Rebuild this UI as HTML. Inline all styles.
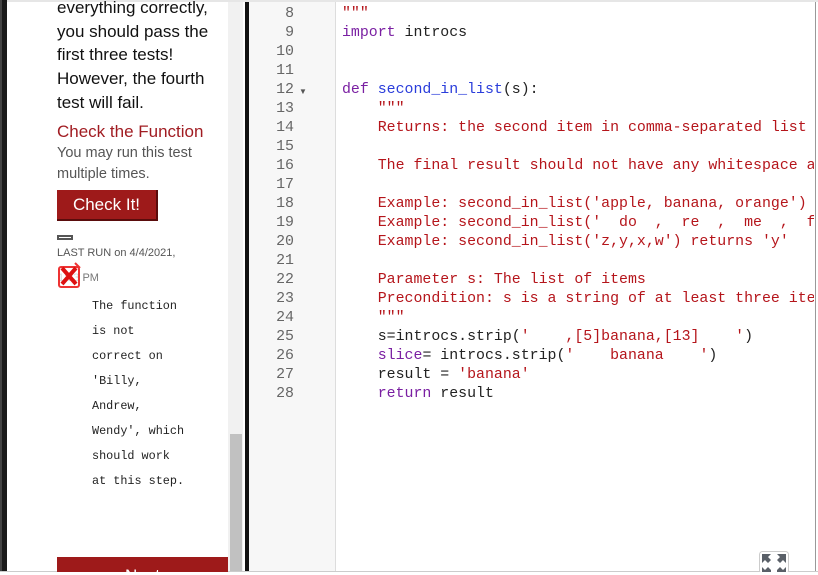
<!DOCTYPE html>
<html><head><style>
*{margin:0;padding:0;box-sizing:border-box}
body{width:818px;height:575px;overflow:hidden;background:#fff;position:relative;font-family:"Liberation Sans",sans-serif}
.abs{position:absolute}
.lp{font-family:"Liberation Sans",sans-serif}
.code{font-family:"Liberation Mono",monospace;font-size:14.9px;line-height:19px;white-space:pre}
.k{color:#7a1fa2}.f{color:#2a3ddb}.s{color:#b5151b}.n{color:#222}
.ln{color:#666;text-align:right;width:44px}
</style></head><body>
<div class="abs" style="left:0;top:0;width:818px;height:2px;background:#e6e6e6"></div>
<div class="abs" style="left:0;top:0;width:2px;height:575px;background:#444"></div>
<div class="abs" style="left:2px;top:0;width:5px;height:575px;background:#1a1a1a"></div>
<div class="abs" style="left:228px;top:2px;width:15px;height:570px;background:#f1f1f1"></div>
<div class="abs" style="left:230px;top:434px;width:12px;height:138px;background:#c1c1c1"></div>
<div class="abs" style="left:245px;top:2px;width:4px;height:573px;background:#111"></div>
<div class="abs" style="left:249px;top:2px;width:87px;height:570px;background:#f7f7f7;border-right:1px solid #ddd"></div>
<div class="abs" style="left:815px;top:2px;width:1px;height:570px;background:#999"></div>
<div class="abs" style="left:0;top:571px;width:818px;height:4px;background:#fff;border-top:1px solid #ccc"></div>

<div class="abs lp" style="left:57px;top:-4px;font-size:17px;line-height:23.7px;color:#111;width:175px">everything correctly,<br>you should pass the<br>first three tests!<br>However, the fourth<br>test will fail.</div>
<div class="abs" style="left:57px;top:122px;font-size:17px;color:#a11c22">Check the Function</div>
<div class="abs lp" style="left:57px;top:143px;font-size:14.5px;line-height:21px;color:#555">You may run this test<br>multiple times.</div>
<div class="abs lp" style="left:57px;top:190px;width:101px;height:31px;background:#9e1a1a;border-right:2px solid #5a0c0c;border-bottom:2px solid #5a0c0c;color:#fff;font-size:17px;text-align:center;line-height:30px">Check It!</div>
<div class="abs" style="left:57px;top:235px;width:16px;height:5px;border:2px solid #555;background:#fff"></div>
<div class="abs lp" style="left:57px;top:247px;font-size:11px;color:#555">LAST RUN on 4/4/2021,</div>
<div class="abs lp" style="left:58px;top:272px;font-size:11px;color:#777">1:33 PM</div>
<svg class="abs" style="left:58px;top:262px" width="24" height="27" viewBox="0 0 24 27"><rect x="1" y="5" width="20" height="20" rx="2" fill="#fff" fill-opacity=".7" stroke="#e33" stroke-width="2"/><path d="M4 6L18 22M18 6L4 22" stroke="#d11" stroke-width="4"/><path d="M17 1L22 6" stroke="#e33" stroke-width="2"/></svg>
<div class="abs code" style="left:92px;top:294px;font-size:11.8px;line-height:25px;color:#222">The function
is not
correct on
'Billy,
Andrew,
Wendy', which
should work
at this step.</div>
<div class="abs" style="left:57px;top:557px;width:171px;height:15px;background:#9e1a1a;overflow:hidden"><div style="color:#fff;font-size:17px;text-align:center;margin-top:9px">Next</div></div>

<div class="abs code ln" style="left:250px;top:5px">8
9
10
11
12
13
14
15
16
17
18
19
20
21
22
23
24
25
26
27
28</div>
<div class="abs" style="left:299px;top:87px;font-size:8px;color:#555">▼</div>
<div class="abs code n" style="left:342px;top:5px;width:472px;overflow:hidden"><span class="s">"""</span>
<span class="k">import</span> introcs


<span class="k">def</span> <span class="f">second_in_list</span>(s):
    <span class="s">"""</span>
<span class="s">    Returns: the second item in comma-separated list</span>

<span class="s">    The final result should not have any whitespace a</span>

<span class="s">    Example: second_in_list('apple, banana, orange')</span>
<span class="s">    Example: second_in_list('  do  ,  re  ,  me  ,  f</span>
<span class="s">    Example: second_in_list('z,y,x,w') returns 'y'</span>

<span class="s">    Parameter s: The list of items</span>
<span class="s">    Precondition: s is a string of at least three ite</span>
<span class="s">    """</span>
    s=introcs.strip(<span class="s">'    ,[5]banana,[13]    '</span>)
    <span class="k">slice</span>= introcs.strip(<span class="s">'    banana    '</span>)
    result = <span class="s">'banana'</span>
    <span class="k">return</span> result</div>
<svg class="abs" style="left:759px;top:551px" width="30" height="21" viewBox="0 0 30 21"><rect x="0.5" y="0.5" width="29" height="22" rx="3" fill="#fff" stroke="#ccc"/><path d="M3 3h9l-3 3 3 3-3 3-3-3-3 3zM27 3h-9l3 3-3 3 3 3 3-3 3 3zM3 21v-5l3 3 3-3 3 3v2zM27 21v-5l-3 3-3-3-3 3v2z" fill="#5a6068"/></svg>
</body></html>
